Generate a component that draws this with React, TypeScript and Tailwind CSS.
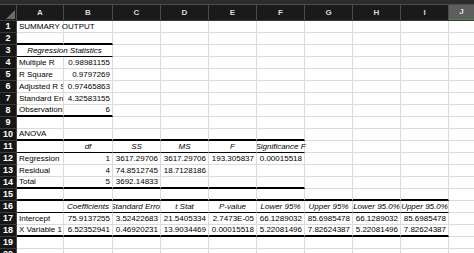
import type { ReactNode } from "react";

type Cell = { t: string; align?: "l" | "r" | "c"; italic?: boolean; spill?: boolean; leftClip?: boolean };
type Edge = "grid" | "thin" | "thick";

const COLS = [
  { k: "A", w: "w-[47px]" },
  { k: "B", w: "w-[49px]" },
  { k: "C", w: "w-[48px]" },
  { k: "D", w: "w-[48px]" },
  { k: "E", w: "w-[48px]" },
  { k: "F", w: "w-[48px]" },
  { k: "G", w: "w-[48px]" },
  { k: "H", w: "w-[48px]" },
  { k: "I", w: "w-[48px]" },
];

const h = (t: string): Cell => ({ t, align: "c", italic: true });

const DATA: Record<number, (string | Cell)[]> = {
  1: [{ t: "SUMMARY OUTPUT", spill: true }],
  4: ["Multiple R", "0.98981155"],
  5: ["R Square", "0.9797269"],
  6: ["Adjusted R Square", "0.97465863"],
  7: ["Standard Error", "4.32583155"],
  8: ["Observations", "6"],
  10: ["ANOVA"],
  11: ["", h("df"), h("SS"), h("MS"), h("F"), { t: "Significance F", align: "c", italic: true, leftClip: true }],
  12: ["Regression", "1", "3617.29706", "3617.29706", "193.305837", "0.00015518"],
  13: ["Residual", "4", "74.8512745", "18.7128186"],
  14: ["Total", "5", "3692.14833"],
  16: ["", h("Coefficients"), h("Standard Error"), h("t Stat"), h("P-value"), h("Lower 95%"), h("Upper 95%"), h("Lower 95.0%"), h("Upper 95.0%")],
  17: ["Intercept", "75.9137255", "3.52422683", "21.5405334", "2.7473E-05", "66.1289032", "85.6985478", "66.1289032", "85.6985478"],
  18: ["X Variable 1", "6.52352941", "0.46920231", "13.9034469", "0.00015518", "5.22081496", "7.82624387", "5.22081496", "7.82624387"],
};

// bottom edges of the ToolPak tables: [row, last column index, style]
const EDGES: [number, number, Edge][] = [
  [2, 1, "thick"],
  [3, 1, "thin"],
  [8, 1, "thick"],
  [10, 5, "thick"],
  [11, 5, "thin"],
  [14, 5, "thick"],
  [15, 8, "thick"],
  [16, 8, "thin"],
  [18, 8, "thick"],
];

function edgeOf(row: number, col: number): Edge {
  const e = EDGES.find(([r, last]) => r === row && col <= last);
  return e ? e[2] : "grid";
}

const EDGE_CLASS: Record<Edge, string> = {
  grid: "border-b border-b-[#dadada]",
  thin: "border-b border-b-black",
  thick: "border-b-2 border-b-black",
};

function toCell(v: string | Cell | undefined): Cell {
  if (!v) return { t: "" };
  if (typeof v !== "string") return v;
  return { t: v, align: /^[\d.E-]+$/.test(v) ? "r" : "l" };
}

function GridCell({ w, edge, cell }: { w: string; edge: Edge; cell: Cell }) {
  const align =
    cell.align === "r" ? "justify-end pr-[2px]" : cell.align === "c" ? "justify-center" : "justify-start pl-[2px]";
  const clip = cell.spill ? "overflow-visible" : cell.leftClip ? "[clip-path:inset(0_-20px_0_0)]" : "overflow-hidden";
  return (
    <div className={`${w} shrink-0 h-full flex items-center border-r border-r-[#dadada] ${EDGE_CLASS[edge]} ${align} ${clip}`}>
      <span className={`whitespace-nowrap leading-none ${cell.italic ? "italic" : ""}`}>{cell.t}</span>
    </div>
  );
}

function RowHead({ children }: { children: ReactNode }) {
  return (
    <div className="w-[17px] shrink-0 h-full flex items-center justify-center bg-[#161616] border-r border-r-[#4a4a4a] border-b border-b-[#3a3a3a] text-white font-bold text-[9px]">
      {children}
    </div>
  );
}

function Row({ n }: { n: number }) {
  const vals = DATA[n] ?? [];
  return (
    <div className="flex h-[12px]">
      <RowHead>{n}</RowHead>
      {n === 3 ? (
        <GridCell w="w-[96px]" edge="thin" cell={{ t: "Regression Statistics", align: "c", italic: true }} />
      ) : (
        COLS.slice(0, 2).map((c, i) => <GridCell key={c.k} w={c.w} edge={edgeOf(n, i)} cell={toCell(vals[i])} />)
      )}
      {COLS.slice(2).map((c, j) => (
        <GridCell key={c.k} w={c.w} edge={edgeOf(n, j + 2)} cell={toCell(vals[j + 2])} />
      ))}
      <div className="flex-1 h-full border-b border-b-[#dadada]" />
    </div>
  );
}

export default function App() {
  const rows = Array.from({ length: 20 }, (_, i) => i + 1);
  return (
    <div className="w-[474px] h-[253px] overflow-hidden bg-white text-black font-['Liberation_Sans',Arial,sans-serif] text-[8px]">
      <div className="h-[5px] bg-[#2c2c2c] border-b border-b-[#4d4d4d]" />
      <div className="flex h-[16px] bg-[#1a1a1a] border-b border-b-[#3a3a3a]">
        <div className="relative w-[17px] shrink-0 h-full border-r border-r-[#4a4a4a]">
          <svg className="absolute right-[1px] bottom-[1px]" width="9" height="9" viewBox="0 0 9 9">
            <polygon points="9,0 9,9 0,9" fill="#6b6b6b" />
          </svg>
        </div>
        {COLS.map((c) => (
          <div
            key={c.k}
            className={`${c.w} shrink-0 h-full flex items-center justify-center border-r border-r-[#4a4a4a] text-[#d8d8d8] font-bold text-[8px]`}
          >
            {c.k}
          </div>
        ))}
        <div className="flex-1 h-full bg-[#5e5e5e] border-b border-b-[#3b8a4f] flex items-center justify-center text-[#e0e0e0] font-bold">
          J
        </div>
      </div>
      {rows.map((n) => (
        <Row key={n} n={n} />
      ))}
    </div>
  );
}
